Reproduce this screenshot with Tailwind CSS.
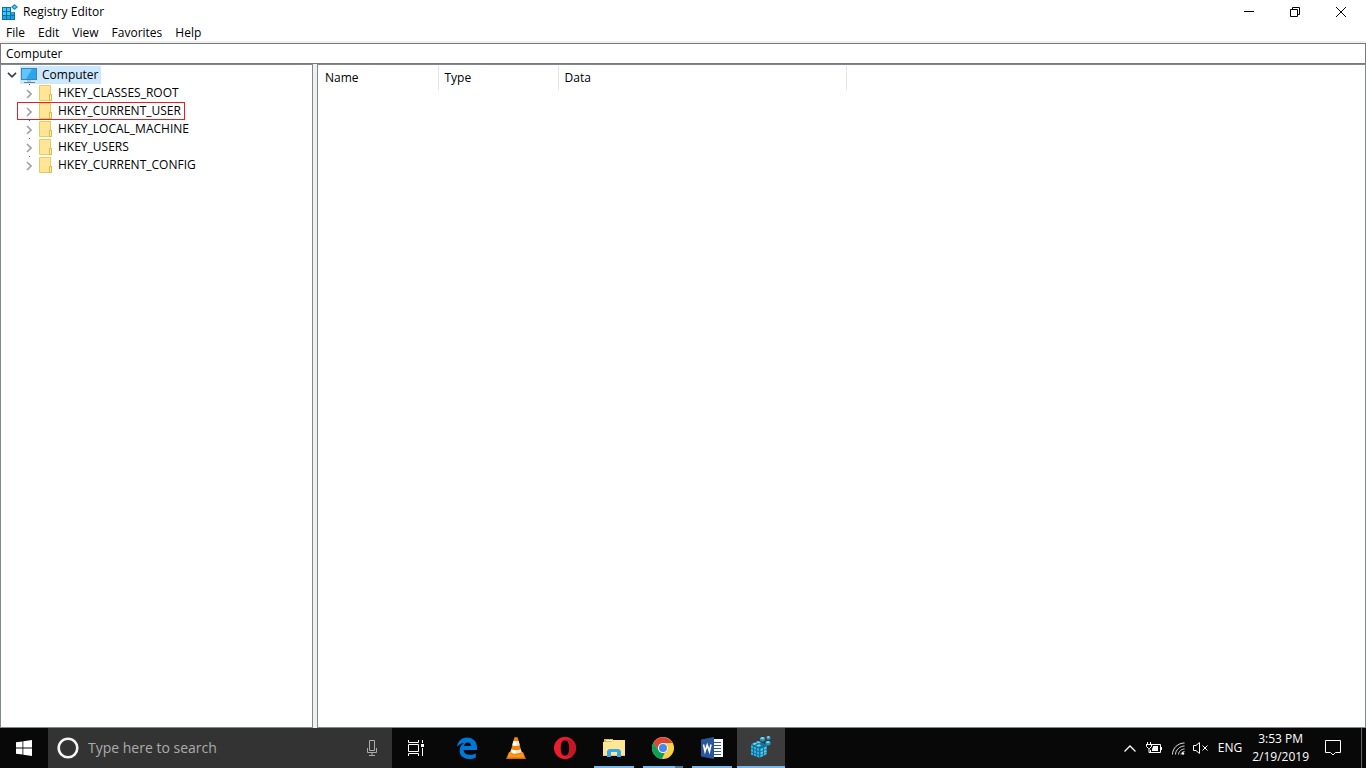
<!DOCTYPE html>
<html lang="en">
<head>
    <meta charset="UTF-8">
    <meta name="viewport" content="width=device-width, initial-scale=1.0">
    <title>Registry Editor</title>
    <script src="https://cdn.jsdelivr.net/npm/@tailwindcss/browser@4"></script>
</head>
<body class="flex h-screen flex-col overflow-hidden bg-white font-['Open_Sans','Noto_Sans',sans-serif] text-[12px] leading-[18px] text-black">
    <!-- Title bar -->
    <header class="flex h-6 shrink-0 items-center pl-0.5">
        <svg class="size-4 shrink-0" viewBox="0 0 16 16">
            <path fill="#0b6fa8" d="M0 3h10v3h3v10H0z"/>
            <path fill="#42c8f4" d="M1 4h3v3H1zM5 4h3v3H5zM1 8h3v3H1zM5 8h3v3H5z"/>
            <path fill="#1ea5dd" d="M9 8h3v3H9zM1 12h3v3H1zM5 12h3v3H5zM9 12h3v3H9z"/>
            <path fill="#fff" d="M9 2h4v6H9z"/>
            <path fill="#1c86bd" d="M12.500 0 16 3 12.500 6 9 3z"/>
            <path fill="#57c3ed" d="m12.500 1.500 2 1.500-2 1.500-2-1.500z"/>
        </svg>
        <h1 class="ml-[5px] text-[12px]">Registry Editor</h1>
        <div class="mr-0.5 ml-auto flex h-5">
            <button aria-label="Minimize" class="flex w-[46px] items-center justify-center"><svg class="size-[10px]" viewBox="0 0 10 10"><path d="M0 4h10v1H0z"/></svg></button>
            <button aria-label="Restore" class="flex w-[46px] items-center justify-center"><svg class="size-[10px]" viewBox="0 0 10 10" fill="none" stroke="#000"><path d="M.5 2.500h7v7h-7zM2.500 2.500v-2h7v7h-2"/></svg></button>
            <button aria-label="Close" class="flex w-[46px] items-center justify-center"><svg class="size-[10px]" viewBox="0 0 10 10" stroke="#000"><path d="m0 0 10 10M10 0 0 10"/></svg></button>
        </div>
    </header>

    <!-- Menu -->
    <nav class="flex h-[19px] shrink-0 items-center gap-[13px] border-b-2 border-[#f0f0f0] pl-1.5">
        <button>File</button>
        <button>Edit</button>
        <button>View</button>
        <button>Favorites</button>
        <button>Help</button>
    </nav>

    <input aria-label="Address" value="Computer" class="h-[21px] w-full shrink-0 border border-[#7a7a7a] px-[5px] outline-none">

    <main class="flex min-h-0 flex-1 bg-[#f0f0f0]">
        <!-- Key tree -->
        <section class="w-[313px] shrink-0 border border-[#828790] bg-white pt-px">
            <div class="flex h-[18px] items-center pl-1.5">
                <button aria-label="Collapse" class="mr-[3px] flex size-[10px] items-center justify-center"><svg class="h-[6px] w-[10px]" viewBox="0 0 10 6" fill="none" stroke="#404040" stroke-width="1.700"><path d="m1 .8 4 4 4-4"/></svg></button>
                <button class="flex h-[18px] items-center bg-[#cce8ff] pr-0.5 pl-px">
                    <svg class="mr-1 h-[18px] w-[17px]" viewBox="0 0 17 18">
                        <path fill="#3d86ad" d="M0 2h16v12H0z"/>
                        <path fill="#2aa5ee" d="M1 3h14v10H1z"/>
                        <path fill="#62c5fa" d="M1 3h10L5 13H1z"/>
                        <path fill="#b4c9d8" d="M6 14h4v2H6z"/>
                        <path fill="#6e8492" d="M3 16h11v1H3z"/>
                    </svg>
                    Computer
                </button>
            </div>
            <ul id="keys"></ul>
        </section>

        <!-- Values -->
        <section class="ml-1 min-w-0 flex-1 border border-[#828790] bg-white pt-px">
            <table class="w-[529px] table-fixed text-left">
                <thead>
                    <tr class="h-6">
                        <th class="w-[120px] border-r border-[#e5e5e5] pl-[7px] font-normal">Name</th>
                        <th class="w-[120px] border-r border-[#e5e5e5] pl-1.5 font-normal">Type</th>
                        <th class="border-r border-[#e5e5e5] pl-1.5 font-normal">Data</th>
                    </tr>
                </thead>
            </table>
        </section>
    </main>

    <!-- Taskbar -->
    <footer class="flex h-10 shrink-0 bg-[#080808] text-white">
        <button aria-label="Start" class="flex w-12 items-center justify-center">
            <svg class="size-4" viewBox="0 0 16 16" fill="#fff"><path d="M0 2.300 6.500 1.400v6.200H0zM7.300 1.300 16 0v7.600H7.300zM0 8.400h6.500v6.200L0 13.700zM7.300 8.400H16V16l-8.700-1.300z"/></svg>
        </button>
        <label class="flex w-[344px] items-center bg-[#333] pl-2 pr-3">
            <svg class="size-6 shrink-0" viewBox="0 0 24 24" fill="none" stroke="#f4f4f4" stroke-width="2.600"><circle cx="12" cy="12" r="9.300"/></svg>
            <input aria-label="Search" placeholder="Type here to search" class="ml-2 min-w-0 flex-1 text-[14px] outline-none placeholder:text-[#acacac]">
            <svg class="h-4 w-4 shrink-0" viewBox="0 0 16 16" fill="none" stroke="#acacac"><path d="M5.500.5h5v10h-5zM3.500 8v4.500h9V8M8 12.500v3M5 15.500h6"/></svg>
        </label>
        <div class="flex gap-px">
            <button aria-label="Task View" class="mr-0.5 flex w-12 items-center justify-center">
                <svg class="size-4" viewBox="0 0 16 16" fill="none" stroke="#fff"><path d="M.5 0v2.500h10V0M.5 16v-2.500h10V16M.5 4.500h10v7H.5zM14.500 0v3M14.500 8v8"/><path fill="#fff" stroke="none" d="M13 4h3v3h-3z"/></svg>
            </button>
            <button aria-label="Edge" class="flex w-12 items-center justify-center">
                <svg class="h-[22px] w-5" viewBox="0 0 20 22"><path fill="#0078d7" d="M0 9.800C.8 4.500 4.300.5 10 .5c6 0 10 4.200 10 10V13H6.600c.2 3.400 3.200 4.800 6.200 4.800 2.500 0 4.400-.7 6-1.600v4.200c-2 1.100-4.300 1.600-7 1.600-5.500 0-9.200-3.300-9.200-8.400 0-3.600 1.800-6.200 4.900-7.900C4.500 6.100 2 7.400 0 9.800zm6.800-.7h7.300C14.100 6.800 12.900 5.400 10.700 5.400c-2 0-3.400 1.400-3.900 3.700z"/></svg>
            </button>
            <button aria-label="VLC" class="flex w-12 items-center justify-center">
                <svg class="h-[22px] w-5" viewBox="0 0 20 22">
                    <path fill="#d96a00" d="M3 15h14l3 7H0z"/>
                    <path fill="#ff981a" d="M3.500 15h13l2 5.500h-17z"/>
                    <path fill="#f58400" d="M8.300.6q1.700-1 3.400 0l4.300 16q-6 3.500-12 0z"/>
                    <path fill="#e8e8e8" d="M7.300 4h5.400l1.100 4.200q-3.800 1.500-7.600 0zM5.200 12.200q4.800 2 9.600 0l.8 3q-5.600 2.800-11.200 0z"/>
                    <path fill="#fff" d="M8 4h2v4.800H7zM6.500 12.800l3 .5v3.500l-3.400-.5z"/>
                </svg>
            </button>
            <button aria-label="Opera" class="flex w-12 items-center justify-center">
                <svg class="size-[22px]" viewBox="0 0 22 22">
                    <ellipse cx="11" cy="11" rx="7.500" ry="9.300" fill="none" stroke="#e5202f" stroke-width="3.200"/>
                    <path fill="#ed1c2e" fill-rule="evenodd" d="M11 0a11 11 0 1 0 0 22 11 11 0 0 0 0-22zm0 2.500c2.600 0 4.300 3.700 4.300 8.500s-1.700 8.500-4.300 8.500S6.700 15.800 6.700 11 8.400 2.500 11 2.500z"/>
                    <path fill="#c31626" d="M11 2.500c2.600 0 4.300 3.700 4.300 8.500s-1.700 8.500-4.300 8.500c3 0 5.500-.5 7.600-.8A11 11 0 0 0 22 11a11 11 0 0 0-3.400-7.800C16.500 2 14 2.500 11 2.500z"/>
                </svg>
            </button>
            <button aria-label="File Explorer" class="flex w-12 flex-col items-center">
                <span class="flex flex-1 items-center"><svg class="mt-0.5 h-[18px] w-[22px]" viewBox="0 0 22 18">
                    <path fill="#efb92e" d="M1 0h9v3H1z"/><path fill="#fff" d="M3 1h6v1H3z"/>
                    <path fill="#ffe695" d="M0 3h8l2-2h12v16H0z"/>
                    <path fill="#f6c84b" d="M0 16h22v1H0z"/>
                    <path fill="#36a8f0" d="M4 18v-8h14v8h-4v-5H8v5z"/>
                    <path fill="#ffe695" d="M4 10h2l-2 2zM18 10v2l-2-2z"/>
                    <path fill="#080808" d="M8 17h6v1H8z"/>
                </svg></span>
                <span class="h-0.5 w-10 bg-[#76b9ed]"></span>
            </button>
            <button aria-label="Chrome" class="flex w-12 flex-col items-center">
                <span class="flex flex-1 items-center"><svg class="mt-0.5 size-[22px]" viewBox="0 0 22 22">
                    <circle cx="11" cy="11" r="11" fill="#fdd043"/>
                    <path fill="#dc4437" d="M1.500 5.500a11 11 0 0 1 19 .5H11a5 5 0 0 0-4.300 7.500z"/>
                    <path fill="#109d58" d="M1.500 5.500 6.700 13.500a5 5 0 0 0 6 2.200L10 22A11 11 0 0 1 1.500 5.500z"/>
                    <circle cx="11" cy="11" r="5" fill="#f4f4f4"/>
                    <circle cx="11" cy="11" r="4" fill="#4688f4"/>
                </svg></span>
                <span class="flex h-0.5 w-10"><span class="w-8 bg-[#76b9ed]"></span><span class="flex-1 bg-[#4e7ba0]"></span></span>
            </button>
            <button aria-label="Word" class="flex w-12 flex-col items-center">
                <span class="flex flex-1 items-center"><svg class="mt-0.5 h-[22px] w-[22px]" viewBox="0 0 22 22">
                    <path fill="#fff" d="M12 2h10v18H12z"/>
                    <path stroke="#2b579a" d="M13 5.500h7M13 8.500h7M13 11.500h7M13 14.500h7M13 17.500h7"/>
                    <path fill="#2b579a" d="M0 2.500 13 0v22L0 19.500z"/>
                    <path fill="none" stroke="#fff" stroke-width="1.600" d="m2.500 7.500 1.500 7 2.200-6.500 2.200 6.500 1.600-7"/>
                </svg></span>
                <span class="h-0.5 w-10 bg-[#76b9ed]"></span>
            </button>
            <button aria-label="Registry Editor" class="flex w-12 flex-col items-center bg-[#3c3c3c]">
                <span class="flex flex-1 items-center"><svg class="h-[22px] w-5" viewBox="0 0 20 22">
                    <path fill="#0f769f" d="m0 8 7-3 9 4v9l-7 4-9-3.500z"/>
                    <path fill="#6fd3f5" d="m1 8 3-1.400 2.500 1L3.500 9zM5 9.600l3-1.300 2.500 1.200-3 1.300zM5 6l2-1 3 1.300-2 1.200z"/>
                    <path fill="#35b4e4" d="m0 9.500 2 .8v2.200l-2-.8zM3 10.700l2 .8v2.200l-2-.8zM6 12l2 .8V15l-2-.8zM0 13l2 .8V16l-2-.8zM3 14.200l2 .8v2.200l-2-.8zM6 15.500l2 .8v2.200l-2-.8zM0 16.500l2 .8v2l-2-.8zM3 17.600l2 .8v2l-2-.8zM6 18.800l2 .8v2l-2-.8z"/>
                    <path fill="#58c8ef" d="m9.500 13 2.500-1v2.200l-2.500 1zM13 11.500l2.500-1v2.200l-2.500 1zM9.500 16.200l2.500-1v2.200l-2.500 1zM13 14.700l2.500-1v2.200l-2.500 1zM9.500 19.300l2.500-1v1.500l-2.500 1.400zM13 17.800l2.500-1v1.200L13 19.500z"/>
                    <path fill="#2096c7" d="m9 2 2.500-1L14 2v2.500l-2.500 1.200L9 4.500zM14.500 6 17 5l2.500 1v2.500L17 9.700l-2.500-1.200zM15.500 1l1.800-1 2 1v2l-2 1-1.800-1z"/>
                    <path fill="#8be0fa" d="m9 2 2.500-1L14 2l-2.500 1.200zM14.500 6 17 5l2.500 1L17 7.200zM15.500 1l1.800-1 2 1-2 1z"/>
                </svg></span>
                <span class="h-0.5 w-12 bg-[#76b9ed]"></span>
            </button>
        </div>
        <div class="ml-auto flex items-center pr-1">
            <button aria-label="Show hidden icons" class="mr-2.5"><svg class="h-[7px] w-3" viewBox="0 0 12 7" fill="none" stroke="#fff" stroke-width="1.300"><path d="m.5 6.500 5.500-5.500 5.500 5.500"/></svg></button>
            <button aria-label="Battery" class="mr-2.5"><svg class="h-3 w-4" viewBox="0 0 16 12" fill="none" stroke="#fff"><path d="M6 2.500h8.500v8h-10V8M15.500 5v3"/><path d="M1.500 0v2M4.500 0v2M0 2.500h6M.5 3v1.500l2 2h1l2-2V3M3 6.500v4h2"/><path fill="#fff" stroke="none" d="M7 4h5v5H6V7l1-2z"/></svg></button>
            <button aria-label="Network" class="mr-2"><svg class="size-[13px]" viewBox="0 0 13 13" fill="none" stroke="#ddd"><path d="M.5 12.500C.5 6 6 1 12.500 1M3.500 12.500C3.500 8 8 4 12.500 4M6.500 12.500c0-3 3-5.500 6-5.500M9 12.500c0-1.500 2-3 3.500-3"/><circle cx="11" cy="11.500" r="1.300" fill="#fff" stroke="none"/></svg></button>
            <button aria-label="Volume muted" class="mr-2.5"><svg class="h-3 w-[15px]" viewBox="0 0 15 12" fill="none" stroke="#fff"><path d="M.5 3.500H3l3.500-3v11L3 8.500H.5zM9.500 3.500l5 5M14.500 3.500l-5 5"/></svg></button>
            <button class="mr-2.5">ENG</button>
            <button class="mr-4 text-center"><time datetime="2019-02-19T15:53">3:53 PM<br>2/19/2019</time></button>
            <button aria-label="Notifications" class="mr-5"><svg class="size-4" viewBox="0 0 16 16" fill="none" stroke="#fff"><path d="M.5.5h15v12h-5L8 15l-2.500-2.500h-5z"/></svg></button>
            <span class="h-10 w-px bg-[#666]"></span>
        </div>
    </footer>

    <script>
        const keys = ['HKEY_CLASSES_ROOT', 'HKEY_CURRENT_USER', 'HKEY_LOCAL_MACHINE', 'HKEY_USERS', 'HKEY_CURRENT_CONFIG'];
        const list = document.getElementById('keys');
        keys.forEach(key => {
            const row = document.createElement('li');
            row.className = 'relative flex h-[18px] items-center pl-[25px]';
            row.innerHTML = `
                <span class="absolute top-0 left-7 h-px w-px bg-[#606060]"></span>
                <button aria-label="Expand ${key}" class="mr-[7px] flex w-[6px] pt-0.5"><svg class="h-[10px] w-[6px]" viewBox="0 0 6 10" fill="none" stroke="#a0a0a0" stroke-width="1.600"><path d="m1 1 4 4-4 4"/></svg></button>
                <svg class="mr-1.5 h-4 w-[13px]" viewBox="0 0 13 16"><path fill="#ffe595" stroke="#ecc95f" d="M.5.5h11v9h1v6H.5z"/><path fill="#fff0bd" stroke="#e3b741" d="M10.500 9.500h2v6h-2z"/></svg>
                <button>${key}</button>
            `;
            // red frame round the key to open
            if (key === 'HKEY_CURRENT_USER') {
                const mark = document.createElement('span');
                mark.className = 'pointer-events-none absolute top-0 left-4 h-[18px] w-[168px] border border-[#ed1c24]';
                row.appendChild(mark);
            }
            list.appendChild(row);
        });
    </script>
</body>
</html>
